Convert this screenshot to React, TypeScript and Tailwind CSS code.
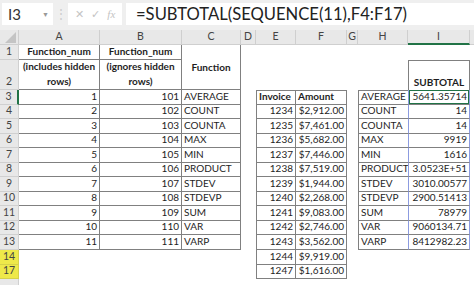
import React from 'react';

const funcs: [string, string, string][] = [
  ['1', '101', 'AVERAGE'],
  ['2', '102', 'COUNT'],
  ['3', '103', 'COUNTA'],
  ['4', '104', 'MAX'],
  ['5', '105', 'MIN'],
  ['6', '106', 'PRODUCT'],
  ['7', '107', 'STDEV'],
  ['8', '108', 'STDEVP'],
  ['9', '109', 'SUM'],
  ['10', '110', 'VAR'],
  ['11', '111', 'VARP'],
];

const invoices: [string, string][] = [
  ['1234', '$2,912.00'],
  ['1235', '$7,461.00'],
  ['1236', '$5,682.00'],
  ['1237', '$7,446.00'],
  ['1238', '$7,519.00'],
  ['1239', '$1,944.00'],
  ['1240', '$2,268.00'],
  ['1241', '$9,083.00'],
  ['1242', '$2,746.00'],
  ['1243', '$3,562.00'],
  ['1244', '$9,919.00'],
  ['1247', '$1,616.00'],
];

const results = [
  '5641.35714',
  '14',
  '14',
  '9919',
  '1616',
  '3.0523E+51',
  '3010.00577',
  '2900.51413',
  '78979',
  '9060134.71',
  '8412982.23',
];

const base = 'flex items-end px-[2px] pb-[1px] overflow-hidden whitespace-nowrap leading-[13px]';
const rowHead = 'flex items-end justify-center pb-[1px] text-[10.5px] leading-[13px] text-[#444] bg-[#e8e8e8] border-r border-b border-[#d0d0d0]';
const colHead = 'flex items-center justify-center text-[10.5px] text-[#444] bg-[#e8e8e8] border-r border-b border-[#cfcfcf]';

function Blank() {
  return <div />;
}

function RowLabel({ n }: { n: number }) {
  if (n === 3) {
    return <div className={`${rowHead} bg-[#d3d3d3] text-[#3d7a55] border-r-[#217346] border-r-2`}>{n}</div>;
  }
  if (n === 14 || n === 17) {
    return <div className={`${rowHead} bg-[#eee94a] text-[#333] border-[#d6d24a]`}>{n}</div>;
  }
  if (n === 18) {
    return <div className={rowHead} />;
  }
  return <div className={rowHead}>{n}</div>;
}

function FormulaBar() {
  return (
    <div className="flex h-[30px] items-start bg-[#efefef] pl-[2px] pt-[3px]">
      <div className="flex h-[22px] w-[51px] items-center justify-between bg-white pl-[6px] pr-[4px] text-[15px] text-[#333]">
        <span>I3</span>
        <span className="text-[7px] text-[#999]">▼</span>
      </div>
      <div className="flex h-[22px] w-[15px] items-center justify-center text-[12px] text-[#ccc]">⋮</div>
      <div className="flex h-[22px] w-[54px] items-center justify-around bg-white px-[3px] text-[11px] text-[#c4c4c4]">
        <span>✕</span>
        <span>✓</span>
        <span className="italic font-[family-name:Liberation_Serif,serif]">fx</span>
      </div>
      <div className="ml-[4px] flex h-[22px] flex-1 items-center bg-white pl-[10px] text-[16.6px] text-[#222]">
        =SUBTOTAL(SEQUENCE(11),F4:F17)
      </div>
    </div>
  );
}

export default function App() {
  return (
    <div className="h-[285px] w-[474px] overflow-hidden bg-white font-[family-name:Lato,sans-serif] text-[10px] text-[#1e1e1e]">
      <FormulaBar />
      <div className="grid grid-cols-[19px_81px_82px_59px_15px_40px_51px_11px_50px_62px_1fr] grid-rows-[15px_15px_30px_repeat(14,14.55px)]">
        {/* column headers */}
        <div className="relative bg-[#e8e8e8] border-r border-b border-[#cfcfcf]">
          <svg className="absolute bottom-[1px] right-[2px]" width="11" height="11" viewBox="0 0 11 11">
            <polygon points="11,0 11,11 0,11" fill="#c4c4c4" />
          </svg>
        </div>
        <div className={colHead}>A</div>
        <div className={colHead}>B</div>
        <div className={colHead}>C</div>
        <div className={colHead}>D</div>
        <div className={colHead}>E</div>
        <div className={colHead}>F</div>
        <div className={colHead}>G</div>
        <div className={colHead}>H</div>
        <div className={`${colHead} bg-[#d8dcd8] border-b-2 border-b-[#217346]`}>I</div>
        <div className="bg-[#e8e8e8] border-b border-[#cfcfcf]" />

        {/* row 1 */}
        <RowLabel n={1} />
        <div className={`${base} justify-center font-bold border-r border-b border-[#808080]`}>Function_num</div>
        <div className={`${base} justify-center font-bold border-r border-b border-[#808080]`}>Function_num</div>
        <div className="row-span-2 flex items-center justify-center font-bold border-r border-b border-[#808080]">Function</div>
        <Blank />
        <Blank />
        <Blank />
        <Blank />
        <Blank />
        <Blank />
        <Blank />

        {/* row 2 */}
        <RowLabel n={2} />
        <div className="flex flex-col items-center justify-end pb-[1px] text-center font-bold leading-[14.5px] border-r border-b border-[#808080]">
          <span>(includes hidden</span>
          <span>rows)</span>
        </div>
        <div className="flex flex-col items-center justify-end pb-[1px] text-center font-bold leading-[14.5px] border-r border-b border-[#808080]">
          <span>(ignores hidden</span>
          <span>rows)</span>
        </div>
        <Blank />
        <Blank />
        <Blank />
        <Blank />
        <Blank />
        <div className={`${base} justify-center font-bold border-t border-l border-r border-[#808080]`}>SUBTOTAL</div>
        <Blank />

        {/* rows 3 - 13 */}
        {funcs.map(([a, b, c], i) => (
          <React.Fragment key={a}>
            <RowLabel n={i + 3} />
            <div className={`${base} justify-end border-r border-b border-[#808080]`}>{a}</div>
            <div className={`${base} justify-end border-r border-b border-[#808080]`}>{b}</div>
            <div className={`${base} justify-start border-r border-b border-[#808080]`}>{c}</div>
            <Blank />
            {i === 0 ? (
              <>
                <div className={`${base} justify-start font-bold border-l border-t border-r border-b border-[#808080]`}>Invoice</div>
                <div className={`${base} justify-start font-bold border-t border-r border-b border-[#808080]`}>Amount</div>
              </>
            ) : (
              <>
                <div className={`${base} justify-end border-l border-r border-b border-[#808080]`}>{invoices[i - 1][0]}</div>
                <div className={`${base} justify-end border-r border-b border-[#808080]`}>{invoices[i - 1][1]}</div>
              </>
            )}
            <Blank />
            {i === 0 ? (
              <div className={`${base} justify-start border-l border-t border-b border-[#808080]`}>{c}</div>
            ) : (
              <div className={`${base} justify-start border-l border-b border-[#808080]`}>{c}</div>
            )}
            {i === 0 ? (
              <div className={`${base} relative justify-end border-l border-r border-b border-l-[#8c9be0] border-r-[#8c9be0] border-b-[#808080]`}>
                {results[i]}
                <div className="absolute -left-[1px] -top-[1px] -right-[1px] -bottom-[1px] border-2 border-[#217346]" />
              </div>
            ) : (
              <div className={`${base} justify-end border-l border-r border-b border-l-[#8c9be0] border-r-[#8c9be0] border-b-[#808080]`}>{results[i]}</div>
            )}
            <Blank />
          </React.Fragment>
        ))}

        {/* rows 14 and 17 (15, 16 hidden) */}
        {[14, 17].map((n, k) => (
          <React.Fragment key={n}>
            <RowLabel n={n} />
            <Blank />
            <Blank />
            <Blank />
            <Blank />
            <div className={`${base} justify-end border-l border-r border-b border-[#808080]`}>{invoices[10 + k][0]}</div>
            <div className={`${base} justify-end border-r border-b border-[#808080]`}>{invoices[10 + k][1]}</div>
            <Blank />
            <Blank />
            <Blank />
            <Blank />
          </React.Fragment>
        ))}

        {/* row 18 */}
        <RowLabel n={18} />
      </div>
    </div>
  );
}
